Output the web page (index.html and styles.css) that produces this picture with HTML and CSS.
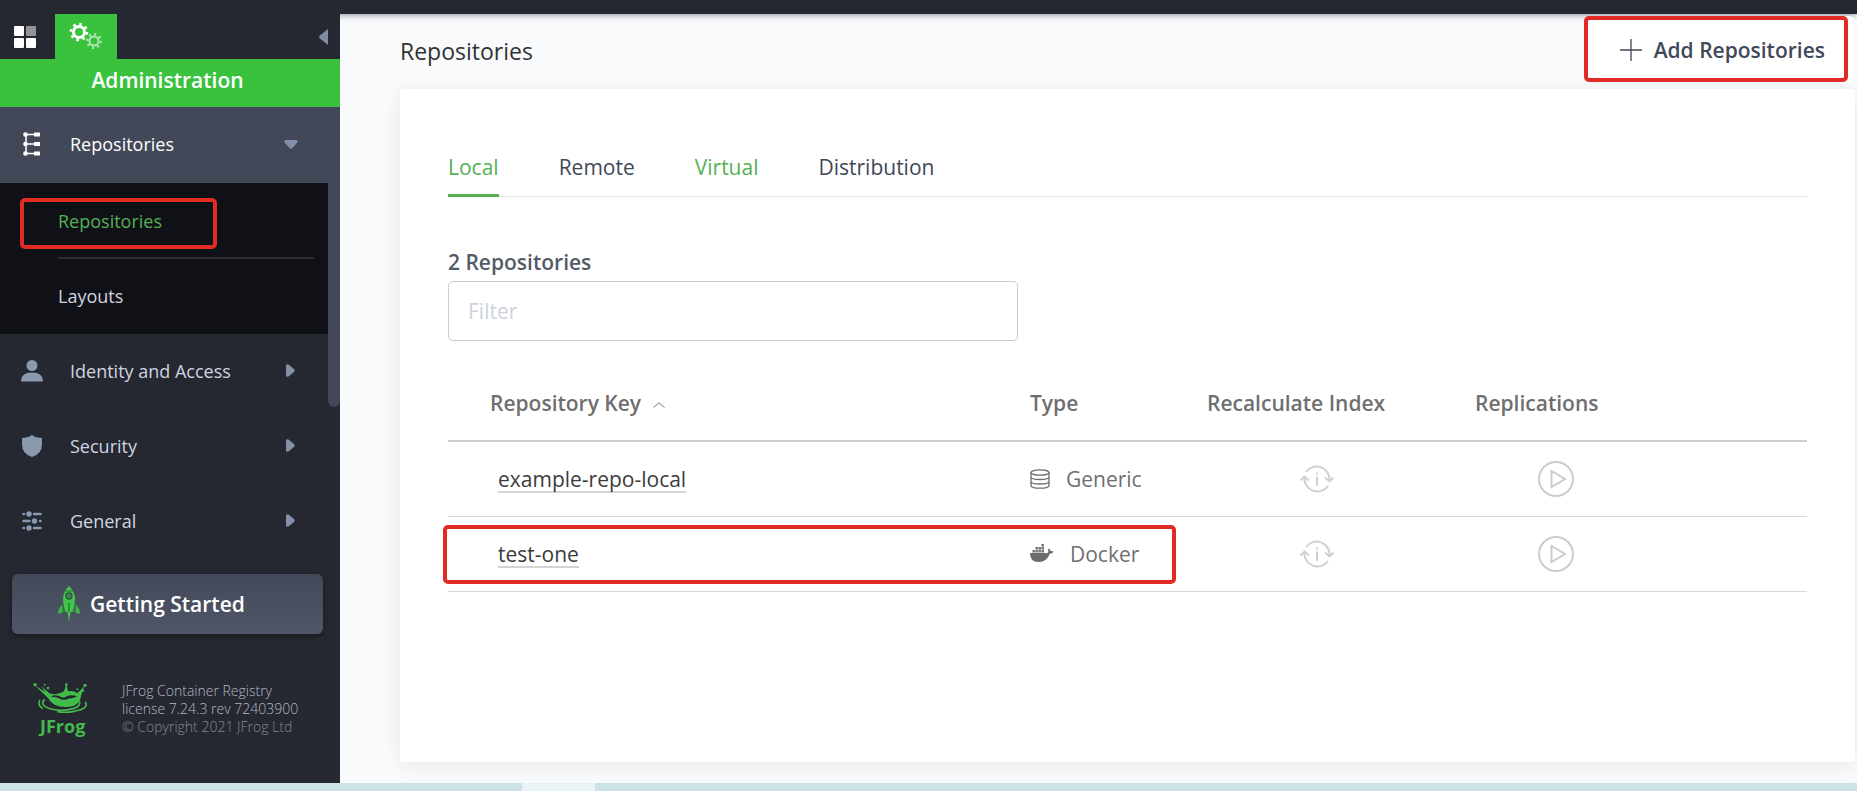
FILE: index.html
```html
<!DOCTYPE html>
<html lang="en">
<head>
<meta charset="utf-8">
<title>Repositories</title>
<link rel="stylesheet" href="styles.css">
</head>
<body>
<div class="app">
  <header class="topbar"></header>
  <div class="shell">
    <aside class="sidebar">
      <div class="modes">
        <button class="mode" type="button" aria-label="Application">
          <svg width="22" height="22" viewBox="0 0 22 22" fill="#fff"><rect width="10" height="10" rx="1"/><rect x="12" width="10" height="10" rx="1" opacity=".5"/><rect y="12" width="10" height="10" rx="1"/><rect x="12" y="12" width="10" height="10" rx="1"/></svg>
        </button>
        <button class="mode mode-active" type="button" aria-label="Administration">
          <svg width="34" height="28" viewBox="0 0 34 28" fill="none">
            <circle cx="10" cy="10" r="5.5" stroke="#fff" stroke-width="3"/>
            <circle cx="10" cy="10" r="8" stroke="#fff" stroke-width="2.6" stroke-dasharray="2.6 3.683"/>
            <g opacity=".6"><circle cx="25" cy="19" r="4.6" stroke="#fff" stroke-width="2"/><circle cx="25" cy="19" r="6.8" stroke="#fff" stroke-width="2.4" stroke-dasharray="2 3.34"/></g>
          </svg>
        </button>
        <button class="collapse" type="button" aria-label="Collapse menu">
          <svg width="9" height="16" viewBox="0 0 9 16" fill="#7e8ca5"><path d="M9 0v16L.6 9.2Q-.4 8 .6 6.8Z"/></svg>
        </button>
      </div>
      <h2 class="mode-title">Administration</h2>
      <div class="menu-wrap">
        <nav class="menu">
          <a class="item item-open" href="#repositories">
            <svg class="item-icon" width="22" height="24" viewBox="0 0 22 24" fill="#fff" stroke="#fff"><path d="M5 2.500V21.500M5 2.500H14M5 12H14M5 21.500H14" fill="none" stroke-width="1.500"/><g stroke="none"><circle cx="4.500" cy="2.500" r="2.300"/><circle cx="4.500" cy="12" r="2.300"/><circle cx="4.500" cy="21.500" r="2.300"/><rect x="13" y=".5" width="6" height="4"/><rect x="13" y="10" width="6" height="4"/><rect x="13" y="19.500" width="6" height="4"/></g></svg>
            <span class="item-label">Repositories</span>
            <svg width="14" height="9" viewBox="0 0 14 9" fill="#8290a9"><path d="M2 0h10q2.500.5 1.300 2.500L8.500 8Q7 9.400 5.500 8L.7 2.500Q-.5.500 2 0Z"/></svg>
          </a>
          <ul class="submenu">
            <li><a class="subitem subitem-active" href="#local">Repositories<span class="mark mark-menu"></span></a></li>
            <li><a class="subitem" href="#layouts">Layouts</a></li>
          </ul>
          <a class="item" href="#identity">
            <svg class="item-icon" width="22" height="22" viewBox="0 0 22 22" fill="#8b99ae"><circle cx="11" cy="5.500" r="5.500"/><path d="M0 21.500C0 15.500 4 12.500 11 12.500S22 15.500 22 21.500Z"/></svg>
            <span class="item-label">Identity and Access</span>
            <svg class="caret" width="9" height="13" viewBox="0 0 9 13"><path d="M0 1.500Q.5-.5 2.500.5L8 5Q9.500 6.500 8 8L2.500 12.500Q.5 13.500 0 11.500Z"/></svg>
          </a>
          <a class="item" href="#security">
            <svg class="item-icon" width="22" height="22" viewBox="0 0 22 22" fill="#8b99ae"><path d="M11 0Q15 3 21 3V9Q21 19 11 22Q1 19 1 9V3Q7 3 11 0Z"/></svg>
            <span class="item-label">Security</span>
            <svg class="caret" width="9" height="13" viewBox="0 0 9 13"><path d="M0 1.500Q.5-.5 2.500.5L8 5Q9.500 6.500 8 8L2.500 12.500Q.5 13.500 0 11.500Z"/></svg>
          </a>
          <a class="item" href="#general">
            <svg class="item-icon" width="22" height="20" viewBox="0 0 22 20" fill="#8b99ae" stroke="#8b99ae" stroke-width="2.400" stroke-linecap="round"><path d="M2.500 3h.5M13 3h6.500M2.500 10h6M19 10h.5M2.500 17h.5M13 17h6.500"/><g stroke="none"><circle cx="8" cy="3" r="2.700"/><circle cx="13.500" cy="10" r="2.700"/><circle cx="8" cy="17" r="2.700"/></g></svg>
            <span class="item-label">General</span>
            <svg class="caret" width="9" height="13" viewBox="0 0 9 13"><path d="M0 1.500Q.5-.5 2.500.5L8 5Q9.500 6.500 8 8L2.500 12.500Q.5 13.500 0 11.500Z"/></svg>
          </a>
        </nav>
        <div class="scroll-thumb"></div>
      </div>
      <button class="start" type="button">
        <svg width="22" height="36" viewBox="0 0 22 36"><path d="M5 18Q0 22 0 28Q3 28 6 25M17 18Q22 22 22 28Q19 28 16 25" fill="#3eb549"/><path d="M11 0Q17 6 17 13Q17 20 14.500 26H7.500Q5 20 5 13Q5 6 11 0Z" fill="#43c54b"/><path d="M7.500 5H14.500" stroke="#276f38"/><circle cx="11" cy="10" r="3" fill="#4a7a5f" stroke="#235b35" stroke-width="1.400"/><path d="M11 17V27M5 18v7M17 18v7" stroke="#256b36" stroke-width="1.200"/><path d="M9.500 26h3L11 36Z" fill="#43c54b"/></svg>
        Getting Started
      </button>
      <footer class="about">
        <svg class="logo" width="56" height="58" viewBox="27 30 168 174" fill="#43bb4b">
          <path d="M78 64Q98 72 120 58L127 36L132 58Q148 54 160 64L182 42L172 68Q168 94 150 101Q115 110 92 98Q78 90 72 78L32 40L64 60L52 42L76 64Z"/>
          <path d="M80 74Q95 65 112 75Q120 79 128 73Q142 67 160 73Q148 80 132 80Q118 87 108 80Q95 73 80 74Z" fill="#252830"/>
          <g fill="none" stroke="#43bb4b" stroke-width="5"><path d="M62 82Q46 98 74 109Q110 121 150 109Q172 102 166 86"/><path d="M48 84Q38 98 56 110M184 90Q196 110 150 118Q125 123 100 119"/></g>
          <circle cx="33" cy="38" r="5"/><circle cx="62" cy="38" r="3"/><circle cx="72" cy="48" r="4"/><circle cx="183" cy="40" r="5"/><circle cx="178" cy="56" r="3"/><circle cx="160" cy="52" r="3"/><circle cx="127" cy="38" r="4"/>
          <text class="logo-text" x="116" y="182" text-anchor="middle">JFrog</text>
        </svg>
        <p class="about-text">JFrog Container Registry<br>license 7.24.3 rev 72403900<br><span class="copyright">© Copyright 2021 JFrog Ltd</span></p>
      </footer>
    </aside>
    <main class="main">
      <div class="page-head">
        <h1 class="page-title">Repositories</h1>
        <button class="add" type="button">
          <svg width="22" height="22" viewBox="0 0 22 22" stroke="#414857" stroke-width="1.300"><path d="M11 0V22M0 11H22"/></svg>
          Add Repositories
          <span class="mark mark-add"></span>
        </button>
      </div>
      <section class="card">
        <nav class="tabs">
          <a class="tab tab-active" href="#local">Local</a>
          <a class="tab" href="#remote">Remote</a>
          <a class="tab tab-green" href="#virtual">Virtual</a>
          <a class="tab" href="#distribution">Distribution</a>
        </nav>
        <label class="count" for="filter">2 Repositories</label>
        <input class="filter" id="filter" type="text" placeholder="Filter">
        <table class="repos">
          <colgroup><col class="col-key"><col class="col-type"><col class="col-index"><col class="col-repl"><col></colgroup>
          <thead>
            <tr><th class="key-head">Repository Key <svg class="sort" width="12" height="6" viewBox="0 0 12 6" fill="none" stroke="#777"><path d="M.5 5.500L6 .8L11.500 5.500"/></svg></th><th>Type</th><th>Recalculate Index</th><th>Replications</th><th></th></tr>
          </thead>
          <tbody>
            <tr>
              <td class="key"><a class="repo" href="#example-repo-local">example-repo-local</a></td>
              <td><span class="type"><svg width="20" height="20" viewBox="0 0 20 20" fill="none" stroke="#6f6f6f" stroke-width="1.300"><ellipse cx="10" cy="3.500" rx="9" ry="2.700"/><path d="M1 3.500V16.500Q1 19.200 10 19.200T19 16.500V3.500M1 8Q1 10.500 10 10.500T19 8M1 12.500Q1 15 10 15T19 12.500"/></svg>Generic</span></td>
              <td><button class="action action-index" type="button" aria-label="Recalculate index"><svg width="34" height="28" viewBox="0 0 34 28" fill="none" stroke="#d0d0d0" stroke-width="2"><path d="M6 7A13 13 0 0 1 29.500 16M28 21A13 13 0 0 1 4.500 12M.5 15.500L4.500 11.500L9 15.500M25 12.500L29.500 16.500L33.500 12.500"/><path d="M17 11.500V21M17 7.500V9.500"/></svg></button></td>
              <td><button class="action action-repl" type="button" aria-label="Run replication"><svg width="36" height="36" viewBox="0 0 36 36" fill="none" stroke="#ccc" stroke-width="2"><circle cx="18" cy="18" r="17"/><path d="M13.500 10L27 18L13.500 26Z"/></svg></button></td>
              <td></td>
            </tr>
            <tr>
              <td class="key"><a class="repo" href="#test-one">test-one</a><span class="mark mark-row"></span></td>
              <td><span class="type"><svg width="24" height="20" viewBox="0 0 24 20" fill="#6b6b6b"><path d="M0 9H17.500Q19 8 18 5.500L18.800 4.500Q20.500 5.500 20.700 7Q22.500 6.800 23.500 7.800Q22.500 9.800 19.800 9.800Q17 18 8.500 18Q0 18 0 9Z"/><path d="M2.500 6h2.400v2.400H2.500zM5.500 6h2.400v2.400H5.500zM8.500 6h2.400v2.400H8.500zM11.500 6h2.400v2.400H11.500zM5.500 3h2.400v2.400H5.500zM8.500 3h2.400v2.400H8.500zM11.500 3h2.400v2.400H11.500zM11.500 0h2.400v2.400H11.500z"/></svg>Docker</span></td>
              <td><button class="action action-index" type="button" aria-label="Recalculate index"><svg width="34" height="28" viewBox="0 0 34 28" fill="none" stroke="#d0d0d0" stroke-width="2"><path d="M6 7A13 13 0 0 1 29.500 16M28 21A13 13 0 0 1 4.500 12M.5 15.500L4.500 11.500L9 15.500M25 12.500L29.500 16.500L33.500 12.500"/><path d="M17 11.500V21M17 7.500V9.500"/></svg></button></td>
              <td><button class="action action-repl" type="button" aria-label="Run replication"><svg width="36" height="36" viewBox="0 0 36 36" fill="none" stroke="#ccc" stroke-width="2"><circle cx="18" cy="18" r="17"/><path d="M13.500 10L27 18L13.500 26Z"/></svg></button></td>
              <td></td>
            </tr>
          </tbody>
        </table>
      </section>
    </main>
  </div>
  <div class="scrollbar"><div class="scrollbar-thumb"></div></div>
</div>
</body>
</html>
```
FILE: styles.css
```css
* { box-sizing: border-box; }

body {
  margin: 0;
  font-family: "Open Sans", "Noto Sans", sans-serif;
  font-size: 18px;
  color: #414857;
}

button {
  font: inherit;
  color: inherit;
  background: none;
  border: 0;
  padding: 0;
}

a { color: inherit; text-decoration: none; }
svg { display: block; flex: none; overflow: visible; }

.app {
  display: flex;
  flex-direction: column;
  min-height: 100vh;
  background: #f8fafc;
}

.topbar {
  height: 14px;
  background: #252830;
  box-shadow: 0 1px 6px rgba(37, 40, 48, .5);
}

.shell { display: flex; flex: 1; }

/* Sidebar */
.sidebar {
  position: relative;
  display: flex;
  flex-direction: column;
  flex: none;
  width: 340px;
  background: #252830;
  color: #d0d4e0;
}

.modes { display: flex; height: 45px; }

.mode {
  display: flex;
  align-items: center;
  padding: 0 19px 0 14px;
}

.mode-active {
  align-items: flex-start;
  padding: 8px 14px;
  background: #3ac23f;
}

.collapse {
  margin-left: auto;
  padding-right: 12px;
}

.mode-title {
  margin: 0;
  height: 48px;
  padding-right: 5px;
  background: #3ac23f;
  color: #fff;
  font-size: 21px;
  font-weight: 600;
  line-height: 42px;
  text-align: center;
}

.menu-wrap { display: flex; }
.menu { flex: 1; }

.item {
  display: flex;
  align-items: center;
  height: 75px;
  padding: 0 33px 2px 21px;
}

.item-open {
  height: 76px;
  padding-right: 30px;
  background: #424857;
  color: #fff;
}

.item-icon { width: 22px; }
.item-label { flex: 1; padding-left: 27px; }
.caret { fill: #8290a9; }

.submenu {
  margin: 0;
  padding: 0 14px 0 58px;
  list-style: none;
  background: #101116;
}

.submenu li + li { border-top: 2px solid #2b2d32; }

.subitem {
  position: relative;
  display: block;
  line-height: 75px;
}

.subitem-active {
  padding-top: 2px;
  color: #55b055;
  line-height: 72px;
}

.scroll-thumb {
  width: 12px;
  height: 300px;
  border-radius: 0 0 6px 6px;
  background: #424857;
}

.start {
  display: flex;
  align-items: center;
  gap: 10px;
  height: 60px;
  margin: 15px 17px 0 12px;
  padding-left: 46px;
  border-radius: 6px;
  background: linear-gradient(#424857, #505769);
  box-shadow: 0 2px 5px rgba(0, 0, 0, .4);
  color: #fff;
  font-size: 21px;
  font-weight: 600;
}

.about {
  display: flex;
  gap: 33px;
  padding: 48px 0 42px 33px;
}

.logo-text {
  font: 700 54px "Open Sans", sans-serif;
}

.about-text {
  margin: 0;
  color: #b2b8c7;
  font-size: 14px;
  font-weight: 300;
  line-height: 18px;
}

.copyright { color: #85888f; }

/* Page */
.main {
  display: flex;
  flex-direction: column;
  flex: 1;
  min-width: 0;
  padding: 0 2px 21px 60px;
}

.page-head {
  display: flex;
  justify-content: space-between;
  height: 75px;
}

.page-title {
  margin: 0;
  color: #333;
  font-size: 23px;
  font-weight: 400;
  line-height: 75px;
}

.add {
  position: relative;
  display: flex;
  align-items: center;
  gap: 12px;
  height: 66px;
  margin-top: 2px;
  padding: 2px 30px 0 36px;
  border-radius: 6px;
  background: #fff;
  font-size: 21px;
  font-weight: 600;
}

.card {
  flex: 1;
  padding: 51px 48px 44px;
  border-radius: 3px;
  background: #fff;
  box-shadow: 0 3px 20px rgba(0, 0, 0, .08);
}

.tabs {
  display: flex;
  gap: 60px;
  border-bottom: 1px solid #e3e4e6;
  font-size: 21px;
}

.tab {
  margin-bottom: -1px;
  border-bottom: 3px solid transparent;
  line-height: 54px;
}

.tab-active { border-color: #55b055; color: #55b055; }
.tab-green { color: #55b055; }

.count {
  display: block;
  margin: 48px 0 2px;
  color: #535a68;
  font-size: 21px;
  font-weight: 600;
  line-height: 34px;
}

.filter {
  display: block;
  width: 570px;
  height: 60px;
  padding: 0 19px;
  border: 1px solid #c8cbd0;
  border-radius: 5px;
  background: #fff;
  color: inherit;
  font: inherit;
  font-size: 21px;
}

.filter::placeholder { color: #cdd3de; }

.repos {
  width: 100%;
  margin-top: 25px;
  border-collapse: collapse;
  table-layout: fixed;
  color: #6f6f6f;
  font-size: 21px;
}

.col-key { width: 582px; }
.col-type { width: 177px; }
.col-index { width: 268px; }
.col-repl { width: 160px; }

.repos th {
  height: 75px;
  padding: 0;
  border-bottom: 2px solid #cdcdcd;
  font-size: 21px;
  font-weight: 600;
  text-align: left;
}

.repos .key-head { padding-left: 42px; }
.sort { display: inline-block; margin-left: 6px; vertical-align: middle; }

.repos td {
  height: 75px;
  padding: 0;
  border-bottom: 1px solid #d9d9d9;
}

.repos .key { position: relative; padding-left: 50px; }

.repo {
  display: inline-block;
  border-bottom: 2px solid #d3d3d3;
  color: #3c3c3c;
  line-height: 24px;
}

.type { display: flex; align-items: center; gap: 16px; }

.action { display: block; }
.action-index { margin-left: 93px; }
.action-repl { margin-left: 63px; }

/* Red highlight frames laid over the content */
.mark {
  position: absolute;
  border: 4px solid #e22b24;
  border-radius: 5px;
  pointer-events: none;
}

.mark-menu { top: 15px; left: -38px; width: 197px; height: 51px; }
.mark-add { inset: 0 7px 0 0; }
.mark-row { top: 8px; left: -5px; width: 733px; height: 59px; }

/* Horizontal scrollbar */
.scrollbar { height: 8px; background: #cde2e6; }
.scrollbar-thumb { width: 73px; height: 8px; margin-left: 522px; background: #e9f2f5; }
```
